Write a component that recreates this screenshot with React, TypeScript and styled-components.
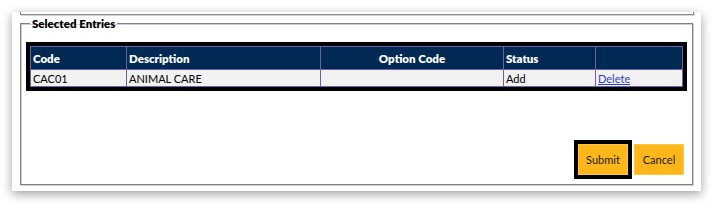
import React from "react";
import styled, { createGlobalStyle } from "styled-components";

const Global = createGlobalStyle`
  html, body { margin: 0; padding: 0; background: #ffffff; }
  body { font-family: "Lato", "Open Sans", "Liberation Sans", sans-serif; font-size: 11px; color: #000; }
`;

const Page = styled.div`
  padding: 12px 18px 18px 12px;
  width: 719px;
  height: 209px;
  box-sizing: border-box;
  overflow: hidden;
`;

const Panel = styled.div`
  width: 689px;
  height: 179px;
  box-sizing: border-box;
  background: #ffffff;
  box-shadow: 0 3px 10px rgba(0, 0, 0, 0.38);
  padding: 0 9px 0 8px;
`;

const PrevBox = styled.div`
  height: 2px;
  width: 672px;
  border: 1px solid #8a8a8a;
  border-top: none;
  box-shadow: 1px 1px 0 #d6d6d6;
`;

const Fieldset = styled.fieldset`
  margin: 2px 0 0 0;
  width: 671px;
  height: 168px;
  box-sizing: border-box;
  border: 1px solid #808080;
  box-shadow: 1px 1px 0 #d0d0d0, inset 1px 1px 0 #d0d0d0;
  padding: 0 5px 0 5px;
  display: flex;
  flex-direction: column;
`;

const Legend = styled.legend`
  font-weight: 800;
  font-size: 11.5px;
  line-height: 13px;
  padding: 0 2px;
  margin-left: 4px;
  color: #000;
`;

const TableWrap = styled.div`
  margin-top: 12px;
  width: 661px;
  box-sizing: border-box;
  border: 4px solid #000;
  background: #000;
`;

const Table = styled.table`
  width: 100%;
  border-collapse: collapse;
  table-layout: fixed;
`;

const Th = styled.th<{ $center?: boolean }>`
  background: #002a54;
  color: #ffffff;
  font-weight: 800;
  font-size: 11.5px;
  height: 22px;
  padding: 0 2px;
  text-align: ${(p) => (p.$center ? "center" : "left")};
  border: 1px solid #6f5fa8;
  vertical-align: middle;
`;

const Td = styled.td`
  background: #f1f1f1;
  color: #000;
  font-size: 11px;
  height: 16px;
  padding: 0 2px;
  border: 1px solid #6f5fa8;
  vertical-align: middle;
  white-space: nowrap;
`;

const Link = styled.a`
  color: #2f3fd0;
  text-decoration: underline;
  cursor: pointer;
`;

const ButtonRow = styled.div`
  margin-top: auto;
  margin-bottom: 9px;
  display: flex;
  justify-content: flex-end;
  gap: 6px;
  padding-right: 3px;
`;

const Button = styled.button<{ $focused?: boolean }>`
  width: 50px;
  height: 31px;
  box-sizing: border-box;
  background: #fdb71a;
  border: 1px solid #ffc73f;
  color: #1a1a1a;
  font-family: "Lato", "Open Sans", "Liberation Sans", sans-serif;
  font-size: 11px;
  padding: 0;
  cursor: pointer;
  outline: ${(p) => (p.$focused ? "4px solid #000" : "none")};
  outline-offset: 0;
`;

export default function App() {
  return (
    <>
      <Global />
      <Page>
        <Panel>
          <PrevBox />
          <Fieldset>
            <Legend>Selected Entries</Legend>
            <TableWrap>
              <Table>
                <colgroup>
                  <col style={{ width: 96 }} />
                  <col style={{ width: 194 }} />
                  <col style={{ width: 183 }} />
                  <col style={{ width: 92 }} />
                  <col />
                </colgroup>
                <thead>
                  <tr>
                    <Th>Code</Th>
                    <Th>Description</Th>
                    <Th $center>Option Code</Th>
                    <Th>Status</Th>
                    <Th></Th>
                  </tr>
                </thead>
                <tbody>
                  <tr>
                    <Td>CAC01</Td>
                    <Td>ANIMAL CARE</Td>
                    <Td></Td>
                    <Td>Add</Td>
                    <Td>
                      <Link href="#">Delete</Link>
                    </Td>
                  </tr>
                </tbody>
              </Table>
            </TableWrap>
            <ButtonRow>
              <Button $focused>Submit</Button>
              <Button>Cancel</Button>
            </ButtonRow>
          </Fieldset>
        </Panel>
      </Page>
    </>
  );
}
